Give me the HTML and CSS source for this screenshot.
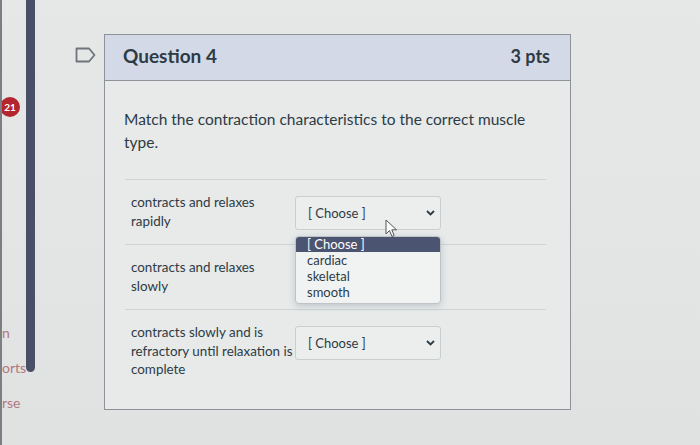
FILE: index.html
```html
<!DOCTYPE html>
<html>
<head>
<meta charset="utf-8">
<link rel="stylesheet" href="styles.css">
</head>
<body>
<div class="screen">
  <aside class="sidebar">
    <span class="badge">21</span>
    <span class="side-link side-n">n</span>
    <span class="side-link side-orts">orts</span>
    <span class="side-link side-se">rse</span>
  </aside>
  <div class="rail"></div>
  <main class="main">
    <section class="card">
      <svg class="flag" width="22" height="16" viewBox="0 0 22 16"><path d="M1.5 1.5 H14 L19.5 8 L14 14.5 H1.5 Z" fill="none" stroke="#6f747c" stroke-width="1.8" stroke-linejoin="round"/></svg>
      <header class="card-head">
        <h2 class="title">Question 4</h2>
        <span class="pts">3 pts</span>
      </header>
      <div class="card-body">
        <p class="prompt">Match the contraction characteristics to the correct muscle type.</p>
        <div class="match">
          <div class="row">
            <div class="label">contracts and relaxes rapidly</div>
            <div class="select">
              <span class="sel-text">[ Choose ]</span>
              <span class="chev"><svg width="9" height="6" viewBox="0 0 9 6"><path d="M1 1 L4.5 4.5 L8 1" fill="none" stroke="#2d3b45" stroke-width="1.8"/></svg></span>
              <svg class="cursor" width="14" height="20" viewBox="0 0 14 20"><path d="M1 1 L1 15 L4.5 11.5 L7 17.5 L9.2 16.5 L6.8 10.8 L11.5 10.8 Z" fill="#fbfbfb" stroke="#555" stroke-width="1" stroke-linejoin="round"/></svg>
              <ul class="options">
                <li class="opt active">[ Choose ]</li>
                <li class="opt">cardiac</li>
                <li class="opt">skeletal</li>
                <li class="opt">smooth</li>
              </ul>
            </div>
          </div>
          <div class="row">
            <div class="label">contracts and relaxes slowly</div>
            <div class="select covered">
              <span class="sel-text">[ Choose ]</span>
              <span class="chev"><svg width="9" height="6" viewBox="0 0 9 6"><path d="M1 1 L4.5 4.5 L8 1" fill="none" stroke="#2d3b45" stroke-width="1.8"/></svg></span>
            </div>
          </div>
          <div class="row">
            <div class="label">contracts slowly and is refractory until relaxation is complete</div>
            <div class="select">
              <span class="sel-text">[ Choose ]</span>
              <span class="chev"><svg width="9" height="6" viewBox="0 0 9 6"><path d="M1 1 L4.5 4.5 L8 1" fill="none" stroke="#2d3b45" stroke-width="1.8"/></svg></span>
            </div>
          </div>
        </div>
      </div>
    </section>
  </main>
</div>
</body>
</html>
```
FILE: styles.css
```css
* { box-sizing: border-box; }
html, body { margin: 0; padding: 0; }
body {
  font-family: Lato, "Open Sans", Arial, sans-serif;
  color: #2d3b45;
  background: #e3e6e5;
  width: 700px;
  height: 445px;
  overflow: hidden;
}
.screen {
  display: flex;
  height: 445px;
  background: linear-gradient(180deg, #e6e8e7 0%, #e2e5e4 60%, #dfe2e1 100%);
}
.sidebar {
  width: 26px;
  flex: none;
  display: flex;
  flex-direction: column;
  border-left: 2px solid #7b7f84;
  padding-top: 97px;
  overflow: hidden;
}
.badge {
  width: 20px;
  height: 20px;
  margin-left: -2px;
  border-radius: 50%;
  background: #b3262f;
  color: #fff;
  font-size: 10px;
  font-weight: 700;
  display: flex;
  align-items: center;
  justify-content: center;
}
.side-link {
  color: #b4777f;
  font-size: 14px;
  line-height: 18px;
  white-space: nowrap;
}
.side-n { margin-top: 207px; }
.side-orts { margin-top: 17px; }
.side-se { margin-top: 17px; }
.rail {
  width: 9px;
  flex: none;
  height: 372px;
  background: #4a4f68;
  border-radius: 0 0 5px 5px;
}
.main {
  flex: 1;
  padding: 34px 0 0 69px;
}
.card {
  position: relative;
  width: 467px;
  height: 376px;
  border: 1px solid #8e939a;
  background: #e7eae9;
}
.flag {
  position: absolute;
  left: -30px;
  top: 12px;
}
.card-head {
  height: 46px;
  background: #d4d9e7;
  border-bottom: 1px solid #8e939a;
  display: flex;
  align-items: center;
  justify-content: space-between;
  padding: 0 20px 4px 18px;
}
.title {
  margin: 0;
  font-size: 19px;
  font-weight: 700;
  color: #2d3b45;
}
.pts {
  font-size: 18px;
  font-weight: 700;
  color: #2d3b45;
}
.card-body {
  padding: 27px 24px 0 19px;
}
.prompt {
  margin: 0 0 25px 0;
  font-size: 15.5px;
  line-height: 23px;
  width: 410px;
}
.match {
  border-top: 1px solid #cfd3d3;
  margin-left: 1px;
}
.row {
  display: flex;
  align-items: flex-start;
  padding: 13px 0 14px 6px;
  border-bottom: 1px solid #cfd3d3;
}
.row:last-child { border-bottom: none; }
.label {
  width: 164px;
  font-size: 13.4px;
  line-height: 18.5px;
  color: #2d3b45;
}
.select {
  position: relative;
  margin-top: 3px;
  width: 146px;
  height: 34px;
  border: 1px solid #c9ced1;
  border-radius: 3px;
  background: #ebeeed;
  display: flex;
  align-items: center;
  justify-content: space-between;
  padding: 0 5px 0 12px;
  font-size: 13px;
}
.select.covered .sel-text,
.select.covered .chev { visibility: hidden; }
.chev { display: flex; }
.cursor {
  position: absolute;
  left: 89px;
  top: 22px;
  z-index: 3;
}
.options {
  position: absolute;
  left: -1px;
  top: 39px;
  width: 146px;
  margin: 0;
  padding: 0 0 3px 0;
  list-style: none;
  background: #f1f3f3;
  border: 1px solid #bfc4c8;
  border-radius: 4px;
  box-shadow: 0 2px 6px rgba(80, 90, 120, 0.25);
  z-index: 2;
  overflow: hidden;
}
.opt {
  font-size: 13px;
  line-height: 16px;
  padding: 0 0 0 11px;
  color: #2d3b45;
}
.opt.active {
  background: #4b5470;
  color: #fff;
  line-height: 15px;
}
```
